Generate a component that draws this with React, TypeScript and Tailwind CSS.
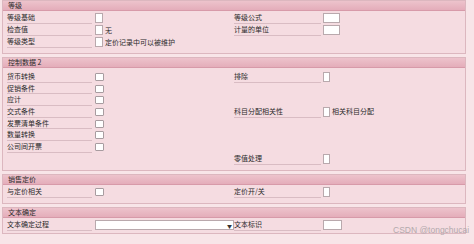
import React from "react";

const F = { fontFamily: '"Noto Sans CJK SC", "Noto Sans", sans-serif' };

function Label({ text, w = "w-[85px]" }: { text: string; w?: string }) {
  return (
    <div className={`${w} h-full flex items-center border-b border-[#d9bcc3] text-[7px] leading-none text-[#2a2a2a] shrink-0`}>
      {text}
    </div>
  );
}

function TallBox({ w = "w-[8px]" }: { w?: string }) {
  return <div className={`${w} h-[10px] bg-white border border-[#b9a9ad] shrink-0`} />;
}

function Check({ w = "w-[8px]" }: { w?: string }) {
  return <div className={`${w} h-[8px] bg-white border border-[#a89ca0] rounded-[1px] shrink-0`} />;
}

function Header({ text }: { text: string }) {
  return (
    <div className="h-[10px] bg-gradient-to-b from-[#edc3cc] to-[#e4adba] border-b border-[#d79aa9] flex items-center pl-[5px] text-[7px] leading-none text-[#2a2a2a] shrink-0">
      {text}
    </div>
  );
}

function Box({ children, h }: { children: React.ReactNode; h: string }) {
  return (
    <div className={`${h} w-[464px] border border-[#dcb7bf] bg-[#f5dce1] flex flex-col shrink-0`}>
      {children}
    </div>
  );
}

function Row({
  left,
  right,
  h = "h-[12px]",
}: {
  left?: React.ReactNode;
  right?: React.ReactNode;
  h?: string;
}) {
  return (
    <div className={`${h} flex items-stretch shrink-0`}>
      <div className="w-[231px] pl-[4px] flex items-stretch shrink-0">{left}</div>
      <div className="flex-1 flex items-stretch">{right}</div>
    </div>
  );
}

function Cell({
  label,
  ctrl,
  after,
  right,
}: {
  label: string;
  ctrl: React.ReactNode;
  after?: string;
  right?: boolean;
}) {
  return (
    <>
      <Label text={label} w={right ? "w-[87px]" : "w-[85px]"} />
      <div className={`${right ? "ml-[2px]" : "ml-[3px]"} flex items-center gap-[2px]`}>
        {ctrl}
        {after && (
          <span className="text-[7px] leading-none text-[#2a2a2a] whitespace-nowrap">{after}</span>
        )}
      </div>
    </>
  );
}

export default function App() {
  return (
    <div style={F} className="relative w-[474px] h-[244px] bg-[#f8e5e8] overflow-hidden pl-[2px] flex flex-col gap-[3px]">
      <Box h="h-[54px]">
        <Header text="等级" />
        <div className="h-[1px]" />
        <Row
          left={<Cell label="等级基础" ctrl={<TallBox />} />}
          right={<Cell right label="等级公式" ctrl={<TallBox w="w-[17px]" />} />}
        />
        <Row
          left={<Cell label="检查值" ctrl={<TallBox />} after="无" />}
          right={<Cell right label="计量的单位" ctrl={<TallBox w="w-[17px]" />} />}
        />
        <Row left={<Cell label="等级类型" ctrl={<TallBox />} after="定价记录中可以被维护" />} />
      </Box>

      <Box h="h-[114px]">
        <Header text="控制数据 2" />
        <div className="h-[3px]" />
        <Row
          h="h-[11.7px]"
          left={<Cell label="货币转换" ctrl={<Check w="w-[9px]" />} />}
          right={<Cell right label="排除" ctrl={<TallBox w="w-[7px]" />} />}
        />
        <Row h="h-[11.7px]" left={<Cell label="促销条件" ctrl={<Check w="w-[9px]" />} />} />
        <Row h="h-[11.7px]" left={<Cell label="应计" ctrl={<Check w="w-[9px]" />} />} />
        <Row
          h="h-[11.7px]"
          left={<Cell label="交式条件" ctrl={<Check w="w-[9px]" />} />}
          right={<Cell right label="科目分配相关性" ctrl={<TallBox w="w-[7px]" />} after="相关科目分配" />}
        />
        <Row h="h-[11.7px]" left={<Cell label="发票清单条件" ctrl={<Check w="w-[9px]" />} />} />
        <Row h="h-[11.7px]" left={<Cell label="数量转换" ctrl={<Check w="w-[9px]" />} />} />
        <Row h="h-[11.7px]" left={<Cell label="公司间开票" ctrl={<Check w="w-[9px]" />} />} />
        <Row
          h="h-[11.7px]"
          right={<Cell right label="零值处理" ctrl={<TallBox w="w-[7px]" />} />}
        />
      </Box>

      <Box h="h-[30px]">
        <Header text="销售定价" />
        <div className="h-[1px]" />
        <Row
          h="h-[12px]"
          left={<Cell label="与定价相关" ctrl={<Check w="w-[9px]" />} />}
          right={<Cell right label="定价开/关" ctrl={<TallBox w="w-[7px]" />} />}
        />
      </Box>

      <Box h="h-[27px]">
        <Header text="文本确定" />
        <div className="h-[1px]" />
        <Row
          h="h-[12px]"
          left={
            <>
              <Label text="文本确定过程" />
              <div className="ml-[3px] flex items-center">
                <div className="w-[139px] h-[10px] bg-white border border-[#b9a9ad] flex items-center justify-end pr-[1px]">
                  <span className="text-[5px] leading-none text-[#333]">▼</span>
                </div>
              </div>
            </>
          }
          right={<Cell right label="文本标识" ctrl={<TallBox w="w-[19px]" />} />}
        />
      </Box>

      <div
        className="absolute left-[393px] top-[226px] text-[8.5px] leading-none text-[#b3a9ac] whitespace-nowrap"
        style={{ fontFamily: '"Liberation Sans", Arial, sans-serif' }}
      >
        CSDN @tongchucai
      </div>
    </div>
  );
}
